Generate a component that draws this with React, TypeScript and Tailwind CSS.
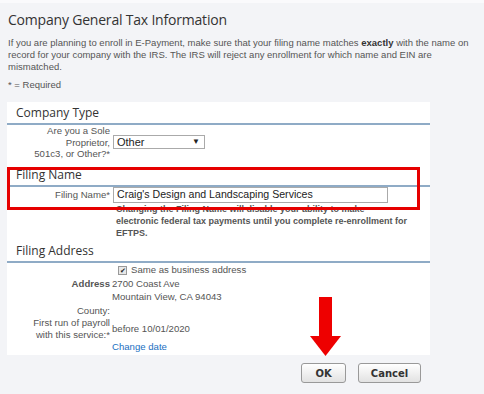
export default function App() {
  return (
    <div className="relative min-h-screen bg-[#f3f4f7] border-t-[3px] border-[#fafafc] font-['Liberation_Sans',Arial,sans-serif] text-[#555]">
      <h1 className="pl-2 pt-[8px] text-[14px] leading-[18px] tracking-[-0.2px] text-[#333] font-['Open_Sans',sans-serif]">
        Company General Tax Information
      </h1>
      <p className="mt-[8px] pl-2 pr-1 text-[9.5px] leading-[12px]">
        If you are planning to enroll in E-Payment, make sure that your filing name matches <b className="text-[#333]">exactly</b> with the name on record for your company with the IRS. The IRS will reject any enrollment for which name and EIN are mismatched.
      </p>
      <p className="mt-[6px] pl-2 text-[9.5px] leading-[12px]">* = Required</p>

      <div className="relative ml-[7px] mt-[11px] w-[423px] bg-white pb-[2px] text-[9.6px]">
        <SectionHeader title="Company Type" />
        <div className="flex items-center">
          <div className="w-[103px] text-right leading-[11.5px]">
            Are you a Sole<br />Proprietor,<br />501c3, or Other?*
          </div>
          <div className="ml-[3px] flex h-[14px] w-[92px] items-center justify-between border border-[#aaa] pl-[3px] pr-[4px] text-[11px] text-[#222]">
            <span>Other</span>
            <span className="text-[8px]">▼</span>
          </div>
        </div>

        <div className="mt-[4.5px]">
          <SectionHeader title="Filing Name" />
        </div>
        <div className="flex items-center">
          <div className="w-[103px] text-right">Filing Name*</div>
          <div className="ml-[3px] flex h-[16px] w-[275px] items-center border border-[#aaa] pl-[3px] text-[10.6px] text-[#222]">
            Craig's Design and Landscaping Services
          </div>
        </div>
        <p className="ml-[109px] w-[300px] text-[9px] font-bold leading-[12px] text-[#555]">
          Changing the Filing Name will disable your ability to make<br />
          electronic federal tax payments until you complete re-enrollment for EFTPS.
        </p>

        <div className="mt-[1px]">
          <SectionHeader title="Filing Address" />
        </div>
        <div className="mt-[1px] flex items-center pl-[111px] leading-[12px]">
          <span className="flex h-[9px] w-[9px] items-center justify-center border border-[#999] bg-[#e8e8e8] text-[7px] leading-none text-[#222]">✔</span>
          <span className="ml-[4px]">Same as business address</span>
        </div>
        <div className="mt-[0.5px] flex leading-[13px]">
          <div className="w-[103px] text-right font-bold">Address</div>
          <div className="ml-[2px]">2700 Coast Ave<br />Mountain View, CA 94043</div>
        </div>
        <div className="mt-[1.5px] flex leading-[13px]">
          <div className="w-[103px] text-right">County:</div>
        </div>
        <div className="flex items-center leading-[12px]">
          <div className="w-[103px] text-right">First run of payroll<br />with this service:*</div>
          <div className="ml-[2px]">before 10/01/2020</div>
        </div>
        <div className="ml-[105px] leading-[12px] text-[#1a6fbf]">Change date</div>

        <div className="absolute left-0 top-[65px] h-[43px] w-[413px] border-[3px] border-[#e60000]"></div>
      </div>

      <div className="ml-[301px] mt-[8px] flex gap-[12px]">
        <button className="h-[20px] w-[45px] rounded-[3px] border border-[#999] bg-gradient-to-b from-white to-[#e2e2e2] text-[10px] font-bold text-[#333] font-['DejaVu_Sans',sans-serif]">OK</button>
        <button className="h-[20px] w-[63px] rounded-[3px] border border-[#999] bg-gradient-to-b from-white to-[#e2e2e2] text-[10px] font-bold text-[#333] font-['DejaVu_Sans',sans-serif]">Cancel</button>
      </div>

      <svg className="absolute left-[310px] top-[294px]" width="31" height="60" viewBox="0 0 31 60">
        <rect x="9" y="0" width="13" height="40" fill="#ee0000" />
        <polygon points="0,39 31,39 15.5,59" fill="#ee0000" />
      </svg>
    </div>
  );
}

function SectionHeader({ title }: { title: string }) {
  return (
    <div className="border-b-2 border-[#8fabc6] pb-[2px] pl-[9px] pt-[3px] text-[12px] leading-[16px] text-[#333] font-['Open_Sans',sans-serif]">
      {title}
    </div>
  );
}
